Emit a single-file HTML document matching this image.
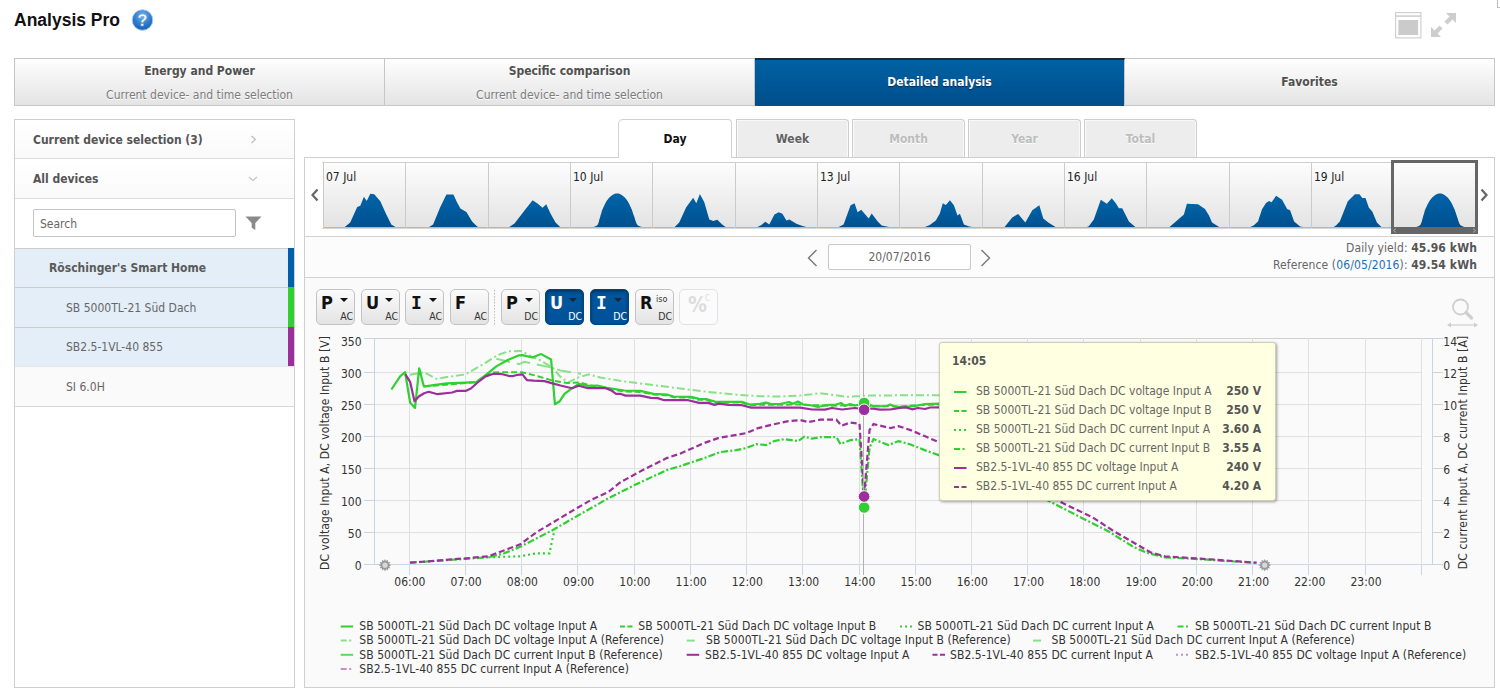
<!DOCTYPE html>
<html lang="en">
<head>
<meta charset="utf-8">
<title>Analysis Pro</title>
<style>
*{box-sizing:border-box;margin:0;padding:0}
html,body{width:1500px;height:688px;overflow:hidden;background:#fff}
body{position:relative;font-family:"DejaVu Sans Condensed","Liberation Sans",sans-serif;font-size:12px;color:#555}
#title{position:absolute;left:14px;top:8px;font-family:"Liberation Sans",sans-serif;font-weight:bold;font-size:17.5px;color:#111;line-height:24px;white-space:nowrap}
#mtabs{position:absolute;left:14px;top:58px;width:1481px;height:48px;border:1px solid #c6c6c6;background:linear-gradient(#fefefe,#e4e4e4);display:flex}
#mtabs .t{flex:0 0 370px;height:46px;border-right:1px solid #c6c6c6;text-align:center;white-space:nowrap}
#mtabs .t:last-child{border-right:0;flex:1 1 auto}
#mtabs .t b{display:block;font-size:12px;line-height:15px;margin-top:5px;color:#505050;text-shadow:0 1px 0 #fff}
#mtabs .t span{display:block;font-size:12px;line-height:15px;margin-top:9px;color:#7b7b7b;text-shadow:0 1px 0 #fff}
#mtabs .t.one b{margin-top:16px}
#mtabs .t.act{background:linear-gradient(#0061a3,#004e8b);border-top:2px solid #1b2a38;margin-top:-1px;height:48px}
#mtabs .t.act b{color:#fff;text-shadow:0 1px 1px #002a50;margin-top:15px}
#side{position:absolute;left:14px;top:119px;width:281px;height:569px;border:1px solid #cfcfcf;background:#fff}
#side .h{height:39px;border-bottom:1px solid #dcdcdc;line-height:40px;padding-left:18px;font-weight:bold;color:#555;position:relative;background:linear-gradient(#fff,#fafafa)}
#search{position:absolute;left:18px;top:89px;width:203px;height:28px;border:1px solid #c4c4c4;border-radius:2px;line-height:28px;padding-left:6px;color:#666;background:#fff}
.dev{position:absolute;left:0;width:279px;line-height:38px;color:#666;white-space:nowrap;border-top:1px solid #cdcdcd}
.dev.sel{background:#e3eef8}
.dev u{position:absolute;right:0;top:-1px;bottom:0;width:6px;text-decoration:none}
.tt{position:absolute;top:119px;width:113px;height:38px;border:1px solid #cdcdcd;border-bottom:0;border-radius:0 4px 0 0;background:#ededed;text-align:center;line-height:39px;font-weight:bold;color:#606060;text-shadow:0 1px 0 #fff;box-shadow:inset 1px 1px 0 #f9f9f9,inset -1px 0 0 #f9f9f9}
.tt.dis{color:#bdbdbd}
.tt.act{background:#fff;color:#111;height:39px;width:114px;z-index:3;border-radius:5px 4px 0 0;box-shadow:none;border-color:#d2d2d2}
#main{position:absolute;left:304px;top:157px;width:1191px;height:531px;border:1px solid #cfcfcf;background:#fafafa}
#strip{position:absolute;left:0;top:0;width:1189px;height:79px;background:#fff;border-bottom:1px solid #d2d2d2}
#daterow{position:absolute;left:0;top:79px;width:1189px;height:41px;border-bottom:1px solid #d2d2d2;background:#fcfcfc}
.th{position:absolute;top:163px;height:65px;border-left:1px solid #cacaca;background:linear-gradient(#fdfdfd,#e3e3e3);font-size:12px;color:#222;line-height:14px;padding:7px 0 0 2px;white-space:nowrap}
#dinput{position:absolute;left:828px;top:244px;width:143px;height:26px;border:1px solid #c9c9c9;border-radius:2px;background:#fff;text-align:center;line-height:24px;color:#666}
#yield{position:absolute;right:23px;top:239.5px;text-align:right;line-height:17px;color:#666;white-space:nowrap;letter-spacing:.12px}
#yield b{color:#555}
#yield a{color:#1b6fb5;text-decoration:none}
.btn{position:absolute;top:289px;width:39px;height:36px;border:1px solid #c2c2c2;border-radius:5px;background:linear-gradient(#fbfbfb,#e3e3e3);color:#111}
.btn b{position:absolute;left:4px;top:1.5px;font-size:18px;line-height:22px;font-weight:bold}
.btn s{position:absolute;right:1px;bottom:2px;font-size:10.5px;line-height:11px;text-decoration:none;color:#333}
.btn i{position:absolute;left:22.5px;top:7.5px;width:0;height:0;border:4px solid transparent;border-top:4.5px solid #111;border-bottom:0}
.btn.on{background:linear-gradient(#004c8c,#00559b 20%,#00529a);border-color:#00467f;color:#fff;box-shadow:inset 0 1px 3px #00305c}
.btn.on s{color:#fff}
.btn.on i{border-top-color:#1a2633}
.btn.off{background:#fbfbfb;border-color:#e2e2e2;color:#dcdcdc}
svg text{font-family:"DejaVu Sans Condensed","Liberation Sans",sans-serif}
#tip{position:absolute;left:939px;top:342px;width:337px;height:159px;background:#ffffe1;border:1px solid #cfcfb8;border-radius:3px;box-shadow:1px 1px 3px rgba(0,0,0,.38)}
#tip h4{position:absolute;left:12px;top:9.5px;font-size:12px;line-height:16px;color:#555;font-weight:bold}
#tip .r{position:absolute;left:36px;right:14px;height:19px;line-height:19px;color:#666;white-space:nowrap}
#tip .r b{position:absolute;right:0;top:0;color:#555}
.lg{position:absolute;color:#333;line-height:14px;white-space:nowrap;letter-spacing:.06px}
</style>
</head>
<body>
<div id="title">Analysis Pro</div>
<svg style="position:absolute;left:131px;top:9px" width="23" height="22" viewBox="0 0 23 22"><defs><radialGradient id="hg" cx="50%" cy="30%" r="70%"><stop offset="0" stop-color="#7ab8f0"/><stop offset="0.55" stop-color="#2f7fd0"/><stop offset="1" stop-color="#1560b4"/></radialGradient></defs><circle cx="11.5" cy="11" r="10.3" fill="url(#hg)" stroke="#a9c9ea" stroke-width="1"/><text x="11.5" y="16.8" text-anchor="middle" font-size="16" font-weight="bold" fill="#fff" stroke="#7f9fc0" stroke-width="0.4" style="font-family:'Liberation Sans',sans-serif">?</text></svg>
<svg style="position:absolute;left:1394px;top:11px" width="64" height="28" viewBox="0 0 64 28"><rect x="1.6" y="1.6" width="25.3" height="25.3" fill="#fff" stroke="#d0d0d0" stroke-width="1.2"/><rect x="1.5" y="4.3" width="25.5" height="1.6" fill="#cfcfcf"/><rect x="4.4" y="9" width="19.7" height="15" fill="#cbcbcb"/><g fill="#cdcdcd"><path d="M52 2h10v10l-3.5-3.5-5 5-3-3 5-5z"/><path d="M47 26H37V16l3.5 3.5 5-5 3 3-5 5z"/></g></svg>
<div style="position:absolute;left:1497px;top:0;width:4px;height:8px;border:1px solid #bbb;border-top:0"></div>
<div id="mtabs">
<div class="t"><b>Energy and Power</b><span>Current device- and time selection</span></div>
<div class="t"><b>Specific comparison</b><span>Current device- and time selection</span></div>
<div class="t one act"><b>Detailed analysis</b></div>
<div class="t one"><b>Favorites</b></div>
</div>
<div id="side">
<div class="h">Current device selection (3)<svg style="position:absolute;left:235px;top:15px" width="7" height="9" viewBox="0 0 7 9"><path d="M1.5 1l4 3.5-4 3.5" fill="none" stroke="#bdbdbd" stroke-width="1.2"/></svg></div>
<div class="h" style="height:40px">All devices<svg style="position:absolute;left:233px;top:17px" width="10" height="6" viewBox="0 0 10 6"><path d="M1 1l4 3.5 4-3.5" fill="none" stroke="#c4c4c4" stroke-width="1.2"/></svg></div>
<div id="search">Search</div>
<svg style="position:absolute;left:230px;top:96px" width="17" height="15" viewBox="0 0 17 15"><path d="M0.5 0.5h16l-6.2 6.5v7l-3.6-2.2v-4.8z" fill="#8a8a8a"/></svg>
<div class="dev sel" style="top:128px;height:39px;padding-left:34px;font-weight:bold;color:#5a5a5a">Röschinger's Smart Home<u style="background:#0060a9"></u></div>
<div class="dev sel" style="top:167px;height:40px;line-height:40px;padding-left:51px">SB 5000TL-21 Süd Dach<u style="background:#2fd02f"></u></div>
<div class="dev sel" style="top:207px;height:39px;padding-left:51px">SB2.5-1VL-40 855<u style="background:#9b2f9b"></u></div>
<div class="dev" style="top:246px;height:41px;padding-left:51px;background:#fafafa;border-bottom:1px solid #d8d8d8;border-top-color:#e6e6e6;line-height:40px">SI 6.0H</div>
</div>
<div class="tt act" style="left:618px">Day</div>
<div class="tt" style="left:736px">Week</div>
<div class="tt dis" style="left:852px">Month</div>
<div class="tt dis" style="left:968px">Year</div>
<div class="tt dis" style="left:1084px">Total</div>
<div id="main"><div id="strip"></div><div id="daterow"></div></div>
<div class="th" style="left:323px;width:82px">07 Jul</div>
<div class="th" style="left:405px;width:83px"></div>
<div class="th" style="left:488px;width:82px"></div>
<div class="th" style="left:570px;width:82px">10 Jul</div>
<div class="th" style="left:652px;width:83px"></div>
<div class="th" style="left:735px;width:82px"></div>
<div class="th" style="left:817px;width:82px">13 Jul</div>
<div class="th" style="left:899px;width:83px"></div>
<div class="th" style="left:982px;width:82px"></div>
<div class="th" style="left:1064px;width:82px">16 Jul</div>
<div class="th" style="left:1146px;width:83px"></div>
<div class="th" style="left:1229px;width:82px"></div>
<div class="th" style="left:1311px;width:82px">19 Jul</div>
<div class="th" style="left:1393px;width:83px"></div>
<svg id="ov" style="position:absolute;left:0;top:0" width="1500" height="688" viewBox="0 0 1500 688">
<defs><linearGradient id="bg" x1="0" y1="0" x2="0" y2="1"><stop offset="0" stop-color="#0064a8"/><stop offset="1" stop-color="#00508f"/></linearGradient></defs>
<polygon points="344.2,227.4 350.2,222.4 357.2,206.9 360.3,205.7 363.9,196.7 366.7,200.9 370.3,193.7 374.3,194.3 380.3,201.3 386.3,214.4 391.3,224.4 396.3,227.4" fill="url(#bg)"/>
<line x1="323.8" y1="227.5" x2="405.1" y2="227.5" stroke="#9bbdd6" stroke-width="1"/>
<polygon points="428.3,227.4 433.1,224.4 440.1,207.4 446.4,194.4 453.4,194.4 457.1,202.4 460.4,208.4 466.4,211.9 472.1,221.4 477.1,226.4 480.5,227.4" fill="url(#bg)"/>
<line x1="406.1" y1="227.5" x2="487.5" y2="227.5" stroke="#9bbdd6" stroke-width="1"/>
<polygon points="508.5,227.4 514.5,223.4 524.5,210.4 532.6,200.3 537.5,203.4 542.6,207.7 546.2,204.3 550.5,213.4 555.5,222.4 560.7,227.4" fill="url(#bg)"/>
<line x1="488.5" y1="227.5" x2="569.9" y2="227.5" stroke="#9bbdd6" stroke-width="1"/>
<polygon points="591.6,227.4 591.6,227.4 591.8,227.4 591.9,227.4 592.1,227.4 592.4,227.4 592.8,227.2 593.4,227.0 594.1,226.8 595.1,226.5 596.0,226.1 596.8,225.6 597.5,224.9 598.0,224.0 598.5,222.8 598.9,221.5 599.2,220.1 599.6,218.8 600.0,217.5 600.4,216.3 600.6,215.1 601.1,213.9 601.4,212.8 601.6,211.7 602.0,210.6 602.4,209.6 602.8,208.7 603.1,207.8 603.6,206.9 604.0,206.1 604.4,205.2 604.8,204.3 605.2,203.5 605.8,202.6 606.1,201.8 606.6,201.0 607.1,200.2 607.8,199.5 608.2,198.8 608.8,198.2 609.4,197.6 609.9,197.0 610.5,196.5 611.1,196.0 611.8,195.5 612.5,195.1 613.1,194.6 613.9,194.3 614.5,194.0 615.0,193.8 615.4,193.6 615.9,193.5 616.2,193.4 616.6,193.4 617.1,193.4 617.5,193.4 617.9,193.4 618.2,193.5 618.8,193.6 619.1,193.8 619.8,194.0 620.2,194.3 621.0,194.6 621.6,195.1 622.4,195.5 623.0,196.0 623.6,196.5 624.2,197.0 624.8,197.6 625.4,198.2 625.9,198.8 626.4,199.5 627.0,200.2 627.5,201.0 628.0,201.8 628.4,202.6 628.9,203.5 629.4,204.3 629.8,205.2 630.1,206.1 630.6,206.9 631.0,207.8 631.4,208.7 631.8,209.6 632.1,210.6 632.5,211.7 632.9,212.8 633.2,213.9 633.6,215.1 634.1,216.3 634.5,217.5 634.9,218.8 635.2,220.1 635.8,221.5 636.2,222.8 636.8,224.0 637.5,224.9 638.1,225.6 639.1,226.1 640.1,226.5 641.1,226.8 642.0,227.0 642.6,227.2 643.1,227.4 643.4,227.4 643.6,227.4 643.8,227.4 643.9,227.4 644.0,227.4" fill="url(#bg)"/>
<line x1="570.9" y1="227.5" x2="652.2" y2="227.5" stroke="#9bbdd6" stroke-width="1"/>
<polygon points="674.2,227.4 679.2,222.4 686.2,207.3 693.2,197.7 696.3,203.3 699.9,193.9 704.3,202.3 709.3,219.4 713.3,221.0 717.3,219.8 722.2,224.4 726.3,227.4" fill="url(#bg)"/>
<line x1="653.2" y1="227.5" x2="734.6" y2="227.5" stroke="#9bbdd6" stroke-width="1"/>
<polygon points="756.3,227.4 761.5,224.9 765.3,221.8 769.3,224.4 774.4,214.4 778.8,212.3 782.4,213.8 786.4,220.4 789.4,219.4 796.4,223.8 802.5,225.9 808.4,227.4" fill="url(#bg)"/>
<line x1="735.5" y1="227.5" x2="816.9" y2="227.5" stroke="#9bbdd6" stroke-width="1"/>
<polygon points="837.6,227.4 843.6,224.4 850.6,205.3 854.6,203.3 857.6,212.3 861.2,209.7 868.7,218.4 871.7,213.4 877.7,221.4 881.7,225.4 891.7,227.4" fill="url(#bg)"/>
<line x1="817.9" y1="227.5" x2="899.2" y2="227.5" stroke="#9bbdd6" stroke-width="1"/>
<polygon points="923.8,227.4 929.8,225.0 935.8,220.4 939.8,213.4 942.8,203.3 945.9,204.9 949.9,200.3 953.9,205.3 957.5,215.4 959.9,213.8 963.9,224.4 969.2,226.4 975.9,227.4" fill="url(#bg)"/>
<line x1="900.2" y1="227.5" x2="981.6" y2="227.5" stroke="#9bbdd6" stroke-width="1"/>
<polygon points="1004.2,227.4 1012.2,217.4 1018.2,214.0 1025.3,222.4 1032.3,210.3 1039.3,205.3 1043.3,218.4 1048.3,222.4 1056.3,227.4" fill="url(#bg)"/>
<line x1="982.6" y1="227.5" x2="1063.9" y2="227.5" stroke="#9bbdd6" stroke-width="1"/>
<polygon points="1085.8,227.4 1089.0,225.9 1093.8,219.4 1100.8,199.7 1106.8,203.7 1111.8,198.3 1115.8,203.3 1118.9,208.3 1122.2,208.3 1128.9,221.4 1135.9,227.4" fill="url(#bg)"/>
<line x1="1065.0" y1="227.5" x2="1146.3" y2="227.5" stroke="#9bbdd6" stroke-width="1"/>
<polygon points="1168.9,227.4 1175.9,221.4 1183.9,214.4 1186.9,203.7 1198.0,204.3 1205.0,208.9 1209.0,215.4 1212.0,222.4 1220.0,227.4" fill="url(#bg)"/>
<line x1="1147.3" y1="227.5" x2="1228.6" y2="227.5" stroke="#9bbdd6" stroke-width="1"/>
<polygon points="1249.0,227.4 1253.6,225.4 1258.0,221.4 1262.0,209.3 1266.0,202.9 1269.0,200.9 1271.6,202.3 1276.1,195.7 1282.1,199.7 1287.1,208.9 1290.1,210.3 1294.1,221.4 1300.1,226.4 1306.1,227.4" fill="url(#bg)"/>
<line x1="1229.6" y1="227.5" x2="1311.0" y2="227.5" stroke="#9bbdd6" stroke-width="1"/>
<polygon points="1332.8,227.4 1336.0,225.4 1339.8,221.4 1347.8,201.3 1354.9,194.3 1359.5,194.3 1362.3,197.9 1365.5,197.9 1368.9,207.8 1372.3,211.4 1376.9,222.4 1381.9,227.4" fill="url(#bg)"/>
<line x1="1312.0" y1="227.5" x2="1393.3" y2="227.5" stroke="#9bbdd6" stroke-width="1"/>
<polygon points="1414.4,227.4 1414.5,227.4 1414.6,227.4 1414.8,227.4 1414.9,227.4 1415.2,227.4 1415.6,227.2 1416.2,227.0 1417.0,226.8 1417.9,226.5 1418.8,226.1 1419.6,225.6 1420.3,224.9 1420.8,224.0 1421.3,222.8 1421.8,221.5 1422.1,220.1 1422.5,218.8 1422.8,217.5 1423.2,216.3 1423.5,215.1 1423.9,213.9 1424.2,212.8 1424.5,211.7 1424.8,210.6 1425.2,209.6 1425.6,208.7 1426.0,207.8 1426.4,206.9 1426.8,206.1 1427.2,205.2 1427.6,204.3 1428.1,203.5 1428.6,202.6 1429.0,201.8 1429.5,201.0 1430.0,200.2 1430.6,199.5 1431.1,198.8 1431.6,198.2 1432.2,197.6 1432.8,197.0 1433.3,196.5 1434.0,196.0 1434.6,195.5 1435.3,195.1 1436.0,194.6 1436.8,194.3 1437.3,194.0 1437.8,193.8 1438.2,193.6 1438.8,193.5 1439.1,193.4 1439.5,193.4 1439.9,193.4 1440.3,193.4 1440.8,193.4 1441.1,193.5 1441.6,193.6 1442.0,193.8 1442.5,194.0 1443.1,194.3 1443.8,194.6 1444.5,195.1 1445.2,195.5 1445.8,196.0 1446.5,196.5 1447.1,197.0 1447.6,197.6 1448.2,198.2 1448.8,198.8 1449.2,199.5 1449.8,200.2 1450.3,201.0 1450.8,201.8 1451.2,202.6 1451.8,203.5 1452.2,204.3 1452.6,205.2 1453.0,206.1 1453.4,206.9 1453.8,207.8 1454.2,208.7 1454.6,209.6 1455.0,210.6 1455.3,211.7 1455.8,212.8 1456.1,213.9 1456.5,215.1 1456.9,216.3 1457.3,217.5 1457.8,218.8 1458.1,220.1 1458.6,221.5 1459.1,222.8 1459.6,224.0 1460.3,224.9 1461.0,225.6 1462.0,226.1 1462.9,226.5 1463.9,226.8 1464.8,227.0 1465.4,227.2 1465.9,227.4 1466.2,227.4 1466.5,227.4 1466.6,227.4 1466.8,227.4 1466.9,227.4" fill="url(#bg)"/>
<line x1="1394.3" y1="227.5" x2="1475.7" y2="227.5" stroke="#9bbdd6" stroke-width="1"/>
<line x1="1477.5" y1="163" x2="1477.5" y2="228" stroke="#cacaca"/>
<line x1="322" y1="162.5" x2="1478" y2="162.5" stroke="#cfcfcf"/>
<line x1="322" y1="228.5" x2="1478" y2="228.5" stroke="#d6d6d6"/>
<rect x="1392.5" y="161.5" width="84" height="71" fill="none" stroke="#666" stroke-width="3"/>
<rect x="1391" y="227" width="87" height="7" fill="#666"/>
<path d="M1396 228.5l-2.5 2 2.5 2M1473 228.5l2.5 2-2.5 2" fill="none" stroke="#aaa" stroke-width="1"/>
<path d="M317.5 189.5l-5 5.5 5 5.5" fill="none" stroke="#666" stroke-width="2.2"/>
<path d="M1481.5 189.5l5 5.5-5 5.5" fill="none" stroke="#666" stroke-width="2.2"/>
<path d="M816.5 250l-8 8 8 8" fill="none" stroke="#777" stroke-width="1.4"/>
<path d="M981.5 250l8 8-8 8" fill="none" stroke="#777" stroke-width="1.4"/>
<line x1="494.5" y1="290" x2="494.5" y2="325" stroke="#bbb" stroke-dasharray="1.5,1.5"/>
<g fill="none" stroke="#cfcfcf"><circle cx="1460.5" cy="307" r="7.5" stroke-width="1.8"/><path d="M1466 312.5l5.5 5.5" stroke-width="3.2" stroke-linecap="round"/><path d="M1448 325h29" stroke-width="1.2"/></g><path d="M1447 325l4-2.5v5zM1478 325l-4-2.5v5z" fill="#cfcfcf"/>
<g shape-rendering="crispEdges"><line x1="374.5" y1="564.5" x2="1432.5" y2="564.5" stroke="#c9d6e6"/><line x1="364.0" y1="564.5" x2="374.5" y2="564.5" stroke="#c5d5e8"/><line x1="1432.5" y1="564.5" x2="1442.5" y2="564.5" stroke="#c5d5e8"/><line x1="374.5" y1="532.5" x2="1421.4" y2="532.5" stroke="#e0e0e2"/><line x1="364.0" y1="532.5" x2="374.5" y2="532.5" stroke="#c5d5e8"/><line x1="1432.5" y1="532.5" x2="1442.5" y2="532.5" stroke="#c5d5e8"/><line x1="374.5" y1="500.5" x2="1421.4" y2="500.5" stroke="#e0e0e2"/><line x1="364.0" y1="500.5" x2="374.5" y2="500.5" stroke="#c5d5e8"/><line x1="1432.5" y1="500.5" x2="1442.5" y2="500.5" stroke="#c5d5e8"/><line x1="374.5" y1="468.5" x2="1421.4" y2="468.5" stroke="#e0e0e2"/><line x1="364.0" y1="468.5" x2="374.5" y2="468.5" stroke="#c5d5e8"/><line x1="1432.5" y1="468.5" x2="1442.5" y2="468.5" stroke="#c5d5e8"/><line x1="374.5" y1="436.5" x2="1421.4" y2="436.5" stroke="#e0e0e2"/><line x1="364.0" y1="436.5" x2="374.5" y2="436.5" stroke="#c5d5e8"/><line x1="1432.5" y1="436.5" x2="1442.5" y2="436.5" stroke="#c5d5e8"/><line x1="374.5" y1="404.5" x2="1421.4" y2="404.5" stroke="#e0e0e2"/><line x1="364.0" y1="404.5" x2="374.5" y2="404.5" stroke="#c5d5e8"/><line x1="1432.5" y1="404.5" x2="1442.5" y2="404.5" stroke="#c5d5e8"/><line x1="374.5" y1="372.5" x2="1421.4" y2="372.5" stroke="#e0e0e2"/><line x1="364.0" y1="372.5" x2="374.5" y2="372.5" stroke="#c5d5e8"/><line x1="1432.5" y1="372.5" x2="1442.5" y2="372.5" stroke="#c5d5e8"/><line x1="374.5" y1="338.5" x2="1432.5" y2="338.5" stroke="#cfcfcf"/><line x1="364.0" y1="338.5" x2="374.5" y2="338.5" stroke="#c5d5e8"/><line x1="1432.5" y1="338.5" x2="1442.5" y2="338.5" stroke="#c5d5e8"/><line x1="409.5" y1="338.0" x2="409.5" y2="564.5" stroke="#e0e0e2"/><line x1="409.5" y1="564.5" x2="409.5" y2="574.5" stroke="#c9d6e6"/><line x1="465.5" y1="338.0" x2="465.5" y2="564.5" stroke="#e0e0e2"/><line x1="465.5" y1="564.5" x2="465.5" y2="574.5" stroke="#c9d6e6"/><line x1="521.5" y1="338.0" x2="521.5" y2="564.5" stroke="#e0e0e2"/><line x1="521.5" y1="564.5" x2="521.5" y2="574.5" stroke="#c9d6e6"/><line x1="577.5" y1="338.0" x2="577.5" y2="564.5" stroke="#e0e0e2"/><line x1="577.5" y1="564.5" x2="577.5" y2="574.5" stroke="#c9d6e6"/><line x1="634.5" y1="338.0" x2="634.5" y2="564.5" stroke="#e0e0e2"/><line x1="634.5" y1="564.5" x2="634.5" y2="574.5" stroke="#c9d6e6"/><line x1="690.5" y1="338.0" x2="690.5" y2="564.5" stroke="#e0e0e2"/><line x1="690.5" y1="564.5" x2="690.5" y2="574.5" stroke="#c9d6e6"/><line x1="746.5" y1="338.0" x2="746.5" y2="564.5" stroke="#e0e0e2"/><line x1="746.5" y1="564.5" x2="746.5" y2="574.5" stroke="#c9d6e6"/><line x1="802.5" y1="338.0" x2="802.5" y2="564.5" stroke="#e0e0e2"/><line x1="802.5" y1="564.5" x2="802.5" y2="574.5" stroke="#c9d6e6"/><line x1="859.5" y1="338.0" x2="859.5" y2="564.5" stroke="#e0e0e2"/><line x1="859.5" y1="564.5" x2="859.5" y2="574.5" stroke="#c9d6e6"/><line x1="915.5" y1="338.0" x2="915.5" y2="564.5" stroke="#e0e0e2"/><line x1="915.5" y1="564.5" x2="915.5" y2="574.5" stroke="#c9d6e6"/><line x1="971.5" y1="338.0" x2="971.5" y2="564.5" stroke="#e0e0e2"/><line x1="971.5" y1="564.5" x2="971.5" y2="574.5" stroke="#c9d6e6"/><line x1="1027.5" y1="338.0" x2="1027.5" y2="564.5" stroke="#e0e0e2"/><line x1="1027.5" y1="564.5" x2="1027.5" y2="574.5" stroke="#c9d6e6"/><line x1="1083.5" y1="338.0" x2="1083.5" y2="564.5" stroke="#e0e0e2"/><line x1="1083.5" y1="564.5" x2="1083.5" y2="574.5" stroke="#c9d6e6"/><line x1="1140.5" y1="338.0" x2="1140.5" y2="564.5" stroke="#e0e0e2"/><line x1="1140.5" y1="564.5" x2="1140.5" y2="574.5" stroke="#c9d6e6"/><line x1="1196.5" y1="338.0" x2="1196.5" y2="564.5" stroke="#e0e0e2"/><line x1="1196.5" y1="564.5" x2="1196.5" y2="574.5" stroke="#c9d6e6"/><line x1="1252.5" y1="338.0" x2="1252.5" y2="564.5" stroke="#e0e0e2"/><line x1="1252.5" y1="564.5" x2="1252.5" y2="574.5" stroke="#c9d6e6"/><line x1="1308.5" y1="338.0" x2="1308.5" y2="564.5" stroke="#e0e0e2"/><line x1="1308.5" y1="564.5" x2="1308.5" y2="574.5" stroke="#c9d6e6"/><line x1="1365.5" y1="338.0" x2="1365.5" y2="564.5" stroke="#e0e0e2"/><line x1="1365.5" y1="564.5" x2="1365.5" y2="574.5" stroke="#c9d6e6"/><line x1="1421.5" y1="338.0" x2="1421.5" y2="564.5" stroke="#e0e0e2"/><line x1="1421.5" y1="564.5" x2="1421.5" y2="574.5" stroke="#c9d6e6"/><line x1="374.5" y1="338.0" x2="374.5" y2="564.5" stroke="#c5d5e8"/><line x1="1432.5" y1="338.0" x2="1432.5" y2="564.5" stroke="#c5d5e8"/></g>
<g font-size="12" fill="#333"><text x="361.5" y="569.9" text-anchor="end">0</text><text x="1443.3" y="569.9">0</text><text x="361.5" y="537.9" text-anchor="end">50</text><text x="1443.3" y="537.9">2</text><text x="361.5" y="505.8" text-anchor="end">100</text><text x="1443.3" y="505.8">4</text><text x="361.5" y="473.8" text-anchor="end">150</text><text x="1443.3" y="473.8">6</text><text x="361.5" y="441.7" text-anchor="end">200</text><text x="1443.3" y="441.7">8</text><text x="361.5" y="409.6" text-anchor="end">250</text><text x="1443.3" y="409.6">10</text><text x="361.5" y="377.6" text-anchor="end">300</text><text x="1443.3" y="377.6">12</text><text x="361.5" y="345.6" text-anchor="end">350</text><text x="1443.3" y="345.6">14</text><text x="409.9" y="586" text-anchor="middle">06:00</text><text x="466.1" y="586" text-anchor="middle">07:00</text><text x="522.4" y="586" text-anchor="middle">08:00</text><text x="578.6" y="586" text-anchor="middle">09:00</text><text x="634.9" y="586" text-anchor="middle">10:00</text><text x="691.1" y="586" text-anchor="middle">11:00</text><text x="747.3" y="586" text-anchor="middle">12:00</text><text x="803.6" y="586" text-anchor="middle">13:00</text><text x="859.8" y="586" text-anchor="middle">14:00</text><text x="916.1" y="586" text-anchor="middle">15:00</text><text x="972.3" y="586" text-anchor="middle">16:00</text><text x="1028.5" y="586" text-anchor="middle">17:00</text><text x="1084.8" y="586" text-anchor="middle">18:00</text><text x="1141.0" y="586" text-anchor="middle">19:00</text><text x="1197.3" y="586" text-anchor="middle">20:00</text><text x="1253.5" y="586" text-anchor="middle">21:00</text><text x="1309.7" y="586" text-anchor="middle">22:00</text><text x="1366.0" y="586" text-anchor="middle">23:00</text><text transform="translate(329,453) rotate(-90)" text-anchor="middle" textLength="234" lengthAdjust="spacing">DC voltage Input A, DC voltage Input B [V]</text><text transform="translate(1467,452.5) rotate(-90)" text-anchor="middle" textLength="233.5" lengthAdjust="spacing">DC current Input A, DC current Input B [A]</text></g>
<path d="M410.1 374.8 L419.2 373.0 L424.1 372.4 L436.2 378.8 L446.8 377.1 L465.6 374.4 L481.6 365.1 L497.6 355.1 L508.3 351.3 L521.7 351.0 L532.4 357.1 L540.4 360.4 L553.0 368.0 L560.0 376.4 L568.0 382.5 L577.4 377.8 L588.7 374.4 L600.1 377.5 L626.8 381.8 L653.6 385.1 L680.3 388.5 L707.0 391.8 L733.8 394.5 L760.0 396.2 L780.0 396.5 L800.0 395.6 L820.2 393.2 L847.0 396.8 L870.0 395.6 L900.0 395.3 L940.0 395.2" fill="none" stroke="#86e286" stroke-width="2" stroke-dasharray="8,3,2,3"/>
<path d="M496.3 358.8 L519.0 364.1 L524.4 361.7 L552.5 367.8 L560.0 370.4 L581.0 373.8" fill="none" stroke="#86e286" stroke-width="2" stroke-dasharray="14,7"/>
<path d="M424.1 386.5 L440.2 385.1 L465.6 382.9 L476.3 382.1 L485.6 375.1 L493.6 372.4 L521.7 372.2 L533.7 375.1 L552.5 380.5 L567.1 383.1 L580.0 382.5 L590.0 385.5 L606.8 388.4 L624.2 391.5 L640.2 391.9 L653.6 394.6 L667.0 395.3 L673.6 397.3 L691.0 397.6 L699.0 399.7 L707.0 400.0 L715.0 402.4 L741.8 402.6 L749.8 405.3 L760.0 404.7 L800.0 404.6 L830.0 405.8 L860.0 405.0 L864.0 402.0 L870.0 406.0 L900.0 406.5 L920.0 405.0 L940.0 404.5" fill="none" stroke="#2fd02f" stroke-width="2" stroke-dasharray="6,3"/>
<path d="M391.4 389.5 L400.1 376.4 L405.1 372.2 L410.1 402.5 L415.0 407.9 L419.2 368.4 L423.9 386.5 L433.5 385.1 L446.8 383.4 L465.6 382.6 L476.3 382.1 L485.6 375.1 L496.3 366.4 L508.3 359.7 L519.0 355.3 L522.4 355.1 L532.4 357.5 L541.1 354.1 L551.1 359.5 L554.9 404.3 L559.8 401.2 L564.5 393.8 L569.8 389.8 L578.7 383.8 L586.7 385.8 L597.4 385.5 L606.8 387.8 L624.2 390.5 L640.2 390.9 L653.6 393.8 L667.0 394.5 L673.6 396.5 L691.0 396.8 L699.0 398.9 L707.0 399.2 L715.0 401.6 L741.8 401.8 L749.8 404.5 L760.0 403.9 L766.0 402.6 L772.0 404.2 L780.0 404.0 L789.0 402.0 L793.0 403.8 L798.0 401.5 L803.0 404.5 L812.0 405.5 L818.0 407.0 L826.0 405.0 L836.0 404.5 L841.0 403.0 L845.0 406.0 L850.0 404.0 L855.0 405.5 L860.0 404.5 L864.1 401.5 L868.0 404.0 L874.0 406.5 L887.0 406.0 L890.0 404.5 L895.0 406.5 L905.0 406.8 L915.0 406.0 L925.0 404.2 L940.0 403.6" fill="none" stroke="#2fd02f" stroke-width="2.2" stroke-linejoin="round"/>
<path d="M405.4 374.4 L410.1 381.8 L414.5 401.2 L418.8 396.5 L424.1 393.2 L428.8 391.8 L437.5 394.2 L452.2 392.5 L456.9 390.9 L465.6 390.9 L470.9 388.5 L477.6 382.5 L485.6 376.4 L493.6 373.8 L500.3 373.8 L508.3 375.8 L512.4 376.2 L517.7 374.8 L522.4 374.4 L527.1 380.2 L533.7 380.7 L544.4 381.1 L552.5 383.4 L560.5 385.5 L572.0 388.2 L578.7 385.8 L588.0 388.2 L605.5 388.2 L610.8 390.1 L616.1 393.8 L620.2 393.8 L625.5 395.6 L640.2 395.6 L650.9 397.8 L657.6 398.1 L664.3 400.2 L688.3 400.2 L699.0 402.9 L708.4 402.9 L714.4 404.9 L719.1 403.6 L728.4 404.8 L741.8 405.2 L751.2 407.6 L800.0 407.6 L812.0 409.5 L825.0 409.6 L832.0 408.0 L842.0 409.5 L855.0 408.0 L864.1 409.3 L872.0 408.5 L880.0 409.6 L890.0 409.5 L900.0 407.8 L906.0 407.4 L912.0 409.3 L918.0 408.0 L925.0 409.0 L930.0 407.5 L940.0 407.3" fill="none" stroke="#9b2f9b" stroke-width="2.2" stroke-linejoin="round"/>
<path d="M410.0 562.7 L466.2 558.8 L488.2 557.3 L504.3 553.3 L520.3 546.7 L552.4 530.3 L578.5 515.2 L608.5 498.2 L634.6 485.1 L666.7 470.1 L680.0 466.2 L704.1 458.1 L720.1 452.1 L736.1 450.1 L746.2 448.1 L756.2 444.1 L766.2 445.1 L774.2 441.1 L784.3 439.1 L798.3 441.1 L804.3 436.7 L812.3 438.7 L820.4 437.1 L836.4 437.1 L840.4 444.1 L850.4 440.1 L859.5 439.1 L864.1 507.3 L869.5 448.1 L873.5 439.1 L888.5 445.1 L898.6 441.1 L910.6 444.5 L924.6 450.1 L938.7 455.1 L960.0 462.0 L1000.0 478.0 L1052.2 502.6 L1080.3 517.2 L1108.3 531.2 L1132.4 546.3 L1146.4 552.7 L1164.5 557.3 L1200.6 559.2 L1256.7 563.0" fill="none" stroke="#2fd02f" stroke-width="2.2" stroke-dasharray="7,2.2,2,2.2"/>
<path d="M488.2 557.3 L520.3 556.3 L536.4 553.3 L549.4 553.3 L554.4 530.3" fill="none" stroke="#2fd02f" stroke-width="2.2" stroke-dasharray="2,3"/>
<path d="M410.0 562.7 L466.2 558.3 L488.2 556.3 L520.3 544.3 L536.4 532.3 L578.5 507.2 L592.5 499.2 L608.5 491.8 L620.6 482.1 L644.6 469.1 L666.7 458.1 L680.0 453.7 L704.1 443.1 L718.1 438.1 L746.2 433.1 L758.2 428.1 L770.2 425.1 L788.3 421.1 L800.3 420.1 L808.3 422.1 L820.4 419.7 L836.4 419.7 L841.4 425.7 L850.4 422.5 L859.5 423.7 L864.1 496.2 L869.5 430.1 L873.5 424.1 L890.5 428.1 L898.6 426.1 L910.6 430.1 L924.6 436.1 L938.7 442.1 L960.0 450.0 L1000.0 470.0 L1064.2 503.8 L1092.3 517.2 L1112.3 530.2 L1136.4 544.3 L1150.4 552.3 L1164.5 556.3 L1200.6 558.7 L1256.7 562.7" fill="none" stroke="#9b2f9b" stroke-width="2.2" stroke-dasharray="6,3"/>
<line x1="863.5" y1="339" x2="863.5" y2="575" stroke="#b2b2b2" stroke-width="1" shape-rendering="crispEdges"/>
<circle cx="864.1" cy="403" r="5.8" fill="#2fd02f" stroke="#fafafa" stroke-width="1"/>
<circle cx="864.1" cy="409.8" r="5.8" fill="#9b2f9b" stroke="#fafafa" stroke-width="1"/>
<circle cx="864.1" cy="507.5" r="5.8" fill="#2fd02f" stroke="#fafafa" stroke-width="1"/>
<circle cx="864.1" cy="496.5" r="5.8" fill="#9b2f9b" stroke="#fafafa" stroke-width="1"/>
<polygon points="391.2,565.2 389.1,566.3 390.4,568.3 388.0,568.2 388.1,570.6 386.1,569.3 385.0,571.4 383.9,569.3 381.9,570.6 382.0,568.2 379.6,568.3 380.9,566.3 378.8,565.2 380.9,564.1 379.6,562.1 382.0,562.2 381.9,559.8 383.9,561.1 385.0,559.0 386.1,561.1 388.1,559.8 388.0,562.2 390.4,562.1 389.1,564.1" fill="#9a9a9a"/><circle cx="385.0" cy="565.2" r="2.6" fill="#d8d8d8"/>
<polygon points="1270.9,565.2 1268.8,566.3 1270.1,568.3 1267.7,568.2 1267.8,570.6 1265.8,569.3 1264.7,571.4 1263.6,569.3 1261.6,570.6 1261.7,568.2 1259.3,568.3 1260.6,566.3 1258.5,565.2 1260.6,564.1 1259.3,562.1 1261.7,562.2 1261.6,559.8 1263.6,561.1 1264.7,559.0 1265.8,561.1 1267.8,559.8 1267.7,562.2 1270.1,562.1 1268.8,564.1" fill="#9a9a9a"/><circle cx="1264.7" cy="565.2" r="2.6" fill="#d8d8d8"/>
<line x1="340.7" y1="626.5" x2="353.2" y2="626.5" stroke="#2fd02f" stroke-width="2"/>
<line x1="620.0" y1="626.5" x2="632.5" y2="626.5" stroke="#2fd02f" stroke-width="2" stroke-dasharray="5,2.5"/>
<line x1="900.0" y1="626.5" x2="912.5" y2="626.5" stroke="#2fd02f" stroke-width="2" stroke-dasharray="2,3"/>
<line x1="1177.5" y1="626.5" x2="1190.0" y2="626.5" stroke="#2fd02f" stroke-width="2" stroke-dasharray="6,2.5,2,2.5"/>
<line x1="340.7" y1="640.6" x2="353.2" y2="640.6" stroke="#86e286" stroke-width="2" stroke-dasharray="6,2.5,2,2.5"/>
<line x1="686.7" y1="640.6" x2="699.2" y2="640.6" stroke="#86e286" stroke-width="2" stroke-dasharray="8,8"/>
<line x1="1033.0" y1="640.6" x2="1045.5" y2="640.6" stroke="#86e286" stroke-width="2" stroke-dasharray="8,8"/>
<line x1="340.7" y1="654.8" x2="353.2" y2="654.8" stroke="#5fd85f" stroke-width="2"/>
<line x1="686.7" y1="654.8" x2="699.2" y2="654.8" stroke="#9b2f9b" stroke-width="2"/>
<line x1="932.5" y1="654.8" x2="945.0" y2="654.8" stroke="#9b2f9b" stroke-width="2" stroke-dasharray="5,2.5"/>
<line x1="1176.0" y1="654.8" x2="1188.5" y2="654.8" stroke="#c88fc8" stroke-width="2" stroke-dasharray="2,3"/>
<line x1="340.7" y1="669.0" x2="353.2" y2="669.0" stroke="#c88fc8" stroke-width="2" stroke-dasharray="6,2.5,2,2.5"/>
</svg>
<div class="lg" style="left:359.3px;top:619.0px">SB 5000TL-21 Süd Dach DC voltage Input A</div>
<div class="lg" style="left:638.3px;top:619.0px">SB 5000TL-21 Süd Dach DC voltage Input B</div>
<div class="lg" style="left:917.5px;top:619.0px">SB 5000TL-21 Süd Dach DC current Input A</div>
<div class="lg" style="left:1195.0px;top:619.0px">SB 5000TL-21 Süd Dach DC current Input B</div>
<div class="lg" style="left:359.3px;top:633.0px">SB 5000TL-21 Süd Dach DC voltage Input A (Reference)</div>
<div class="lg" style="left:706.0px;top:633.0px">SB 5000TL-21 Süd Dach DC voltage Input B (Reference)</div>
<div class="lg" style="left:1051.5px;top:633.0px">SB 5000TL-21 Süd Dach DC current Input A (Reference)</div>
<div class="lg" style="left:359.3px;top:647.5px">SB 5000TL-21 Süd Dach DC current Input B (Reference)</div>
<div class="lg" style="left:705.0px;top:647.5px">SB2.5-1VL-40 855 DC voltage Input A</div>
<div class="lg" style="left:950.0px;top:647.5px">SB2.5-1VL-40 855 DC current Input A</div>
<div class="lg" style="left:1195.0px;top:647.5px">SB2.5-1VL-40 855 DC voltage Input A (Reference)</div>
<div class="lg" style="left:359.3px;top:661.5px">SB2.5-1VL-40 855 DC current Input A (Reference)</div>
<div id="dinput">20/07/2016</div>
<div id="yield">Daily yield: <b>45.96 kWh</b><br>Reference (<a>06/05/2016</a>): <b>49.54 kWh</b></div>
<div class="btn " style="left:316px"><b>P</b><i></i><s>AC</s></div>
<div class="btn " style="left:361px"><b>U</b><i></i><s>AC</s></div>
<div class="btn " style="left:405px"><b style="font-family:'DejaVu Sans Mono','Liberation Mono',monospace;left:5px">I</b><i></i><s>AC</s></div>
<div class="btn " style="left:450px"><b>F</b><s>AC</s></div>
<div class="btn " style="left:501px"><b>P</b><i></i><s>DC</s></div>
<div class="btn on" style="left:545px"><b>U</b><i></i><s>DC</s></div>
<div class="btn on" style="left:590px"><b style="font-family:'DejaVu Sans Mono','Liberation Mono',monospace;left:5px">I</b><i></i><s>DC</s></div>
<div class="btn " style="left:635px"><b>R</b><em style="position:absolute;left:20px;top:4px;font-size:9px;line-height:10px;font-style:normal;color:#333">iso</em><s>DC</s></div>
<div class="btn off" style="left:679px"><b style="left:8px;top:4px;font-size:21px">%</b><em style="position:absolute;left:25px;top:4px;font-size:8px;line-height:9px;font-style:normal">C</em></div>
<div id="tip"><h4>14:05</h4>
<svg style="position:absolute;left:14px;top:46.5px" width="13" height="4"><line x1="0" y1="2" x2="12.5" y2="2" stroke="#2fd02f" stroke-width="2"/></svg>
<div class="r" style="top:38.5px">SB 5000TL-21 Süd Dach DC voltage Input A<b>250 V</b></div>
<svg style="position:absolute;left:14px;top:65.6px" width="13" height="4"><line x1="0" y1="2" x2="12.5" y2="2" stroke="#2fd02f" stroke-width="2" stroke-dasharray="5,2.5"/></svg>
<div class="r" style="top:57.6px">SB 5000TL-21 Süd Dach DC voltage Input B<b>250 V</b></div>
<svg style="position:absolute;left:14px;top:84.7px" width="13" height="4"><line x1="0" y1="2" x2="12.5" y2="2" stroke="#2fd02f" stroke-width="2" stroke-dasharray="2,3"/></svg>
<div class="r" style="top:76.7px">SB 5000TL-21 Süd Dach DC current Input A<b>3.60 A</b></div>
<svg style="position:absolute;left:14px;top:103.8px" width="13" height="4"><line x1="0" y1="2" x2="12.5" y2="2" stroke="#2fd02f" stroke-width="2" stroke-dasharray="6,2.5,2,2.5"/></svg>
<div class="r" style="top:95.8px">SB 5000TL-21 Süd Dach DC current Input B<b>3.55 A</b></div>
<svg style="position:absolute;left:14px;top:122.9px" width="13" height="4"><line x1="0" y1="2" x2="12.5" y2="2" stroke="#9b2f9b" stroke-width="2"/></svg>
<div class="r" style="top:114.9px">SB2.5-1VL-40 855 DC voltage Input A<b>240 V</b></div>
<svg style="position:absolute;left:14px;top:142.0px" width="13" height="4"><line x1="0" y1="2" x2="12.5" y2="2" stroke="#9b2f9b" stroke-width="2" stroke-dasharray="5,2.5"/></svg>
<div class="r" style="top:134.0px">SB2.5-1VL-40 855 DC current Input A<b>4.20 A</b></div>
</div>
</body>
</html>
